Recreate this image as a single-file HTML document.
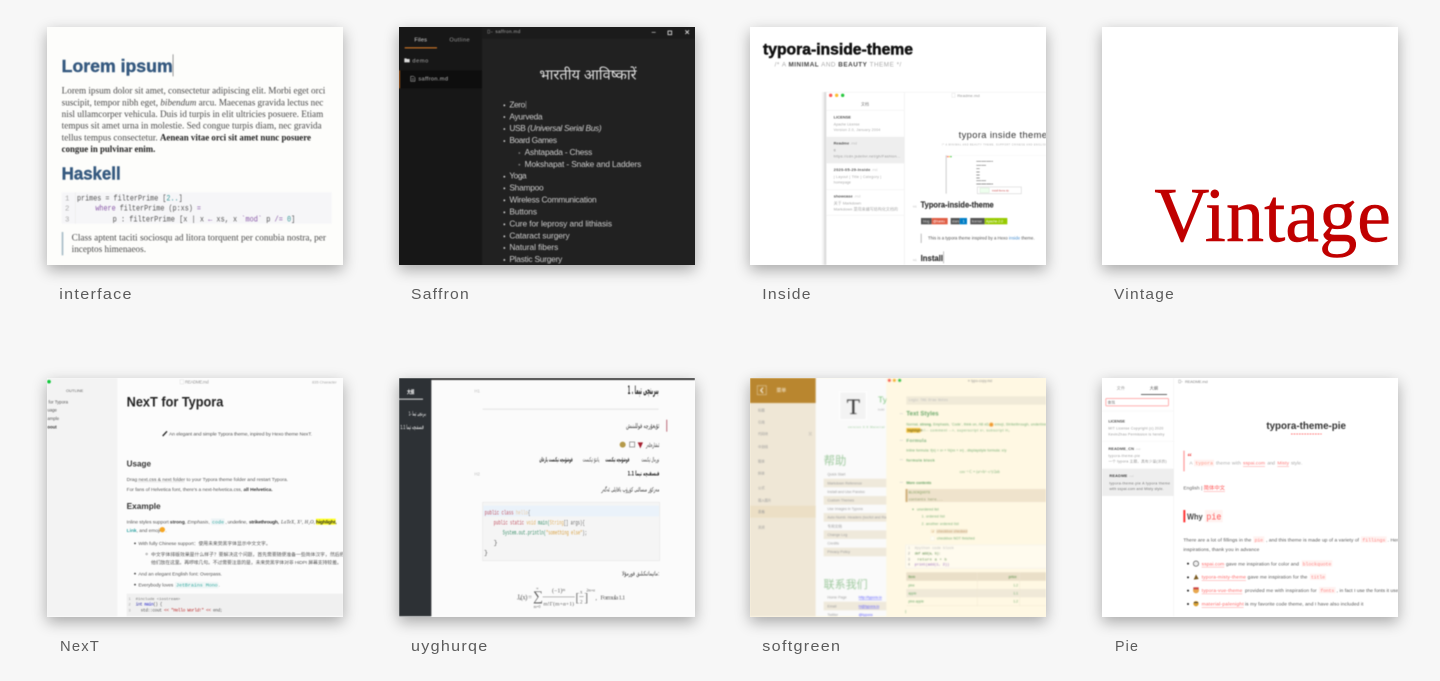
<!DOCTYPE html>
<html lang="en">
<head>
<meta charset="utf-8">
<title>Themes</title>
<style>
html,body{margin:0;padding:0;width:1440px;height:681px;overflow:hidden;background:#f7f7f7}
.c{position:absolute;width:296px;height:238.33px;background:#fff;box-shadow:0 5px 14px rgba(0,0,0,.32);overflow:hidden}
.c svg{position:absolute;left:0;top:0;width:296px;height:238.33px;display:block;filter:blur(.5px)}
svg text{font-family:"Liberation Sans","Noto Sans CJK SC","DejaVu Sans",sans-serif;white-space:pre}
svg .s{font-family:"Liberation Serif","Noto Serif CJK SC",serif}
svg .m{font-family:"Liberation Mono","DejaVu Sans Mono",monospace}
svg .b{font-weight:700}
svg .u{font-family:"DejaVu Sans",sans-serif}
#labels{position:absolute;left:0;top:0;width:1440px;height:681px}
#labels text{font-size:15px;fill:#5c5c5c;letter-spacing:1.2px}
</style>
</head>
<body>

<!-- interface -->
<div class="c" style="left:47px;top:26.67px;background:#fdfdfb">
<svg viewBox="51 50 888 715">
<text x="95" y="185" font-size="54" class="b" fill="#35597f" stroke="#35597f" stroke-width="1.2" textLength="333" lengthAdjust="spacingAndGlyphs">Lorem ipsum</text>
<rect x="428" y="132" width="2.5" height="66" fill="#888"/>
<g font-size="29" fill="#4a4a4a" class="s">
<text class="s" x="95" y="250" font-size="29" fill="#4a4a4a" textLength="791" lengthAdjust="spacingAndGlyphs">Lorem ipsum dolor sit amet, consectetur adipiscing elit. Morbi eget orci</text>
<text class="s" x="95" y="285" font-size="29" fill="#4a4a4a" textLength="785" lengthAdjust="spacingAndGlyphs">suscipit, tempor nibh eget, <tspan font-style="italic">bibendum</tspan> arcu. Maecenas gravida lectus nec</text>
<text class="s" x="95" y="320" font-size="29" fill="#4a4a4a" textLength="785" lengthAdjust="spacingAndGlyphs">nisl ullamcorper vehicula. Duis id turpis in elit ultricies posuere. Etiam</text>
<text class="s" x="95" y="355" font-size="29" fill="#4a4a4a" textLength="780" lengthAdjust="spacingAndGlyphs">tempus sit amet urna in molestie. Sed congue turpis diam, nec gravida</text>
<text class="s" x="95" y="390" font-size="29" fill="#4a4a4a" textLength="288" lengthAdjust="spacingAndGlyphs">tellus tempus consectetur.</text>
<text class="s b" x="390" y="390" font-size="29" fill="#222" textLength="453" lengthAdjust="spacingAndGlyphs">Aenean vitae orci sit amet nunc posuere</text>
<text class="s b" x="95" y="425" font-size="29" fill="#222" textLength="281" lengthAdjust="spacingAndGlyphs">congue in pulvinar enim.</text>
</g>
<text x="95" y="508" font-size="52" class="b" fill="#35597f" stroke="#35597f" stroke-width="1.2" textLength="177" lengthAdjust="spacingAndGlyphs">Haskell</text>
<rect x="95" y="546" width="810" height="94" fill="#f6f6f8"/>
<rect x="135" y="546" width="2" height="94" fill="#eaeaea"/>
<text class="m" x="105" y="570" font-size="22" fill="#aaa">1</text>
<text class="m" x="105" y="601" font-size="22" fill="#aaa">2</text>
<text class="m" x="105" y="633" font-size="22" fill="#aaa">3</text>
<text class="m" x="141" y="570" font-size="24" fill="#555" textLength="317" lengthAdjust="spacingAndGlyphs">primes = filterPrime [<tspan fill="#3a9a9a">2..</tspan>]</text>
<text class="m" x="196" y="601" font-size="24" fill="#555" textLength="317" lengthAdjust="spacingAndGlyphs"><tspan fill="#8a5aa8">where</tspan> filterPrime (p:xs) <tspan fill="#8a5aa8">=</tspan></text>
<text class="m" x="248" y="633" font-size="24" fill="#555" textLength="548" lengthAdjust="spacingAndGlyphs">p : filterPrime [x | x <tspan fill="#8a5aa8">←</tspan> xs, x <tspan fill="#8a5aa8">`mod`</tspan> p <tspan fill="#8a5aa8">/=</tspan> <tspan fill="#3a9a9a">0</tspan>]</text>
<rect x="95" y="665" width="5" height="70" fill="#a6bcc6"/>
<text class="s" x="125" y="690" font-size="29" fill="#4a4a4a" textLength="763" lengthAdjust="spacingAndGlyphs">Class aptent taciti sociosqu ad litora torquent per conubia nostra, per</text>
<text class="s" x="125" y="725" font-size="29" fill="#4a4a4a" textLength="223" lengthAdjust="spacingAndGlyphs">inceptos himenaeos.</text>
</svg>
</div>

<!-- Saffron -->
<div class="c" style="left:398.67px;top:26.67px;background:#212121">
<svg viewBox="41 50 888 715" style="filter:blur(.45px)">
<rect x="41" y="50" width="888" height="715" fill="#212121"/>
<rect x="41" y="50" width="249" height="715" fill="#171717"/>
<rect x="290" y="50" width="639" height="35" fill="#1b1b1b"/>
<text x="87" y="93" font-size="17" fill="#d8d8d8" textLength="38">Files</text>
<text x="192" y="93" font-size="17" fill="#999" textLength="61">Outline</text>
<rect x="58" y="111" width="97" height="3" fill="#e8832a"/>
<path d="M57 144h6l2 2h8v10H57z" fill="#ddd"/>
<text x="81" y="156" font-size="17" fill="#aaa" textLength="48">demo</text>
<rect x="41" y="180" width="249" height="54" fill="#0e0e0e"/>
<rect x="41" y="180" width="3" height="54" fill="#c86a20"/>
<path d="M76 198h9l4 4v11H76z" fill="none" stroke="#bbb" stroke-width="1.5"/><path d="M79 205h7M79 209h7" stroke="#bbb" stroke-width="1.2"/>
<text x="99" y="211" font-size="17" fill="#bbb" textLength="89">saffron.md</text>
<path d="M307 59h6v10h-6zM316 65h6" fill="none" stroke="#888" stroke-width="1.3"/>
<text x="330" y="68" font-size="14" fill="#aaa" textLength="75">saffron.md</text>
<path d="M799 66h12" stroke="#ccc" stroke-width="2"/>
<rect x="848" y="62" width="11" height="11" fill="none" stroke="#ddd" stroke-width="2.5"/>
<path d="M900 60l11 11M911 60l-11 11" stroke="#eee" stroke-width="2.4"/>
<text x="462" y="207" font-size="44" fill="#ddd" textLength="292" lengthAdjust="spacingAndGlyphs" style="font-family:'Noto Sans Devanagari','Lohit Devanagari','FreeSans','DejaVu Sans',sans-serif">भारतीय आविष्कारें</text>
<g fill="#ccc" font-size="25">
<text x="372" y="291" font-size="25" fill="#ccc" textLength="48">Zero</text><rect x="421" y="272" width="1.5" height="23" fill="#aaa"/>
<text x="372" y="327" font-size="25" fill="#ccc" textLength="100">Ayurveda</text>
<text x="372" y="362" font-size="25" fill="#ccc" textLength="277">USB <tspan font-style="italic">(Universal Serial Bus)</tspan></text>
<text x="372" y="398" font-size="25" fill="#ccc" textLength="143">Board Games</text>
<text x="418" y="434" font-size="25" fill="#ccc" textLength="203">Ashtapada - Chess</text>
<text x="418" y="470" font-size="25" fill="#ccc" textLength="350">Mokshapat - Snake and Ladders</text>
<text x="372" y="505" font-size="25" fill="#ccc" textLength="52">Yoga</text>
<text x="372" y="541" font-size="25" fill="#ccc" textLength="103">Shampoo</text>
<text x="372" y="577" font-size="25" fill="#ccc" textLength="262">Wireless Communication</text>
<text x="372" y="612" font-size="25" fill="#ccc" textLength="83">Buttons</text>
<text x="372" y="648" font-size="25" fill="#ccc" textLength="308">Cure for leprosy and lithiasis</text>
<text x="372" y="684" font-size="25" fill="#ccc" textLength="181">Cataract surgery</text>
<text x="372" y="719" font-size="25" fill="#ccc" textLength="147">Natural fibers</text>
<text x="372" y="755" font-size="25" fill="#ccc" textLength="159">Plastic Surgery</text>
</g>
<g fill="#ccc">
<circle cx="357" cy="285" r="2.8"/><circle cx="357" cy="320" r="2.8"/><circle cx="357" cy="356" r="2.8"/><circle cx="357" cy="392" r="2.8"/><circle cx="357" cy="499" r="2.8"/><circle cx="357" cy="534" r="2.8"/><circle cx="357" cy="570" r="2.8"/><circle cx="357" cy="606" r="2.8"/><circle cx="357" cy="642" r="2.8"/><circle cx="357" cy="678" r="2.8"/><circle cx="357" cy="713" r="2.8"/><circle cx="357" cy="749" r="2.8"/>
<circle cx="402" cy="428" r="2.8" fill="#777"/><circle cx="402" cy="463" r="2.8" fill="#777"/>
</g>
</svg>
</div>

<!-- Inside -->
<div class="c" style="left:750.33px;top:26.67px">
<svg viewBox="46 50 888 715" style="filter:blur(.6px)">
<rect x="46" y="50" width="888" height="715" fill="#fff"/>
<text x="85" y="132" font-size="46" class="b" fill="#111" stroke="#111" stroke-width="1.5" textLength="450" lengthAdjust="spacingAndGlyphs">typora-inside-theme</text>
<text x="120" y="168" font-size="19" fill="#aaa" textLength="380">/* A <tspan fill="#444" font-weight="700">MINIMAL</tspan> AND <tspan fill="#444" font-weight="700">BEAUTY</tspan> THEME */</text>
<rect x="262" y="245" width="14" height="520" fill="#ddd" opacity=".35"/>
<rect x="268" y="245" width="8" height="520" fill="#bbb" opacity=".4"/>
<rect x="275" y="245" width="660" height="520" fill="#fff"/>
<rect x="275" y="245" width="660" height="1.5" fill="#eee"/>
<rect x="508" y="245" width="2" height="520" fill="#eee"/>
<circle cx="288" cy="255" r="5" fill="#fc5b57"/><circle cx="306" cy="255" r="5" fill="#fdbd2e"/><circle cx="324" cy="255" r="5" fill="#28c83f"/>
<text x="379" y="285" font-size="12" fill="#777">文档</text>
<path d="M275 300h233M275 380h233M275 538h233M275 615h233" stroke="#eee" stroke-width="1.5"/>
<text x="297" y="324" font-size="12" class="b" fill="#555">LICENSE</text>
<text x="297" y="345" font-size="11" fill="#aaa">Apache License</text>
<text x="297" y="362" font-size="11" fill="#aaa" textLength="140">Version 2.0, January 2004</text>
<rect x="275" y="380" width="233" height="79" fill="#eee"/>
<text x="297" y="403" font-size="12" class="b" fill="#555">Readme <tspan fill="#bbb" font-weight="400">.md</tspan></text>
<text x="297" y="423" font-size="11" fill="#999">tt</text>
<text x="297" y="441" font-size="11" fill="#999" textLength="200">https://cdn.jsdelivr.net/gh/Fashion...</text>
<text x="297" y="482" font-size="12" class="b" fill="#555" textLength="110">2020-05-29-Inside</text><text x="410" y="482" font-size="11" fill="#ccc">.md</text>
<text x="297" y="503" font-size="11" fill="#aaa" textLength="143">| Layout | Title | Category |</text>
<text x="297" y="520" font-size="11" fill="#aaa">homepage</text>
<text x="297" y="561" font-size="12" class="b" fill="#555">showcase <tspan fill="#ccc" font-weight="400">.md</tspan></text>
<text x="297" y="582" font-size="12" fill="#aaa">关于 Markdown</text>
<text x="297" y="600" font-size="12" fill="#aaa" textLength="193">Markdown 是用来编写结构化文档的</text>
<rect x="652" y="249" width="9" height="12" fill="none" stroke="#ddd" stroke-width="1.2"/>
<text x="668" y="260" font-size="12" fill="#999" textLength="67">Readme.md</text>
<text x="672" y="383" font-size="28" fill="#333" textLength="265">typora inside theme</text>
<text x="622" y="405" font-size="7" fill="#aaa" textLength="315">/* A MINIMAL AND BEAUTY THEME, SUPPORT CHINESE AND ENGLISH</text>
<rect x="633" y="435" width="302" height="115" fill="#fff"/>
<rect x="633" y="435" width="302" height="1" fill="#eee"/><rect x="633" y="435" width="3" height="115" fill="#ccc"/>
<circle cx="639" cy="439" r="2" fill="#fc5b57"/><circle cx="644" cy="439" r="2" fill="#fdbd2e"/><circle cx="649" cy="439" r="2" fill="#28c83f"/>
<path d="M725 453h50M725 465h30M725 475h10M725 485h10M725 494h10M725 503h10M725 511h30M725 521h50" stroke="#777" stroke-width="2" stroke-dasharray="14 1"/>
<rect x="728" y="530" width="132" height="20" fill="#fff" stroke="#ccc" stroke-width="1.5"/>
<rect x="736" y="533" width="28" height="14" fill="#efe" stroke="#cdc"/><text x="772" y="543" font-size="7" fill="#c55">install-theme.zip</text>
<text x="535" y="591" font-size="9" fill="#bbb">H1</text>
<text x="558" y="591" font-size="25" class="b" fill="#333" stroke="#333" stroke-width=".5" textLength="219" lengthAdjust="spacingAndGlyphs">Typora-inside-theme</text>
<rect x="559" y="623" width="32" height="19" fill="#555"/><rect x="591" y="623" width="48" height="19" fill="#e05d44"/>
<rect x="648" y="623" width="27" height="19" fill="#555"/><rect x="675" y="623" width="22" height="19" fill="#007ec6"/>
<rect x="707" y="623" width="43" height="19" fill="#555"/><rect x="750" y="623" width="68" height="19" fill="#97ca00"/>
<text x="565" y="636" font-size="10" fill="#ddd">blog</text><text x="595" y="636" font-size="10" fill="#fff">@hanru</text>
<text x="652" y="636" font-size="10" fill="#ddd">stars</text><text x="684" y="636" font-size="10" fill="#fff">1</text>
<text x="711" y="636" font-size="10" fill="#ddd">license</text><text x="754" y="636" font-size="10" fill="#fff">Apache-2.0</text>
<rect x="558" y="670" width="3" height="28" fill="#bbb"/>
<text x="580" y="688" font-size="13" fill="#555" textLength="320">This is a typora theme inspired by a Hexo <tspan fill="#4a90d0">inside</tspan> theme.</text>
<text x="535" y="752" font-size="9" fill="#bbb">H1</text>
<text x="558" y="752" font-size="26" class="b" fill="#333" stroke="#333" stroke-width=".5" textLength="67" lengthAdjust="spacingAndGlyphs">Install</text>
<rect x="626" y="723" width="1.5" height="36" fill="#888"/>
</svg>
</div>

<!-- Vintage -->
<div class="c" style="left:1102px;top:26.67px">
<svg viewBox="36 50 888 715" style="filter:blur(.25px)">
<text class="s" x="193" y="692" font-size="232" fill="#c00000" stroke="#c00000" stroke-width="1.6" textLength="710" lengthAdjust="spacingAndGlyphs">Vintage</text>
</svg>
</div>

<!-- NexT -->
<div class="c" style="left:47px;top:378.33px;background:#fcfcfc">
<svg viewBox="51 40 888 715">
<rect x="51" y="40" width="888" height="715" fill="#fcfcfc"/>
<rect x="51" y="40" width="211" height="715" fill="#f3f3f3"/>
<circle cx="57" cy="51" r="5.5" fill="#10c83a"/>
<text x="108" y="82" font-size="12" fill="#666" textLength="52">OUTLINE</text>
<text x="52" y="116" font-size="13" fill="#555" textLength="62"> for Typora</text>
<text x="52" y="141" font-size="13" fill="#555">uage</text>
<text x="52" y="166" font-size="13" fill="#555">ample</text>
<text x="52" y="192" font-size="13" class="b" fill="#333">oout</text>
<rect x="450" y="45" width="11" height="13" fill="none" stroke="#ddd" stroke-width="1.3"/>
<text x="465" y="56" font-size="13" fill="#999" textLength="71">README.md</text>
<text x="846" y="56" font-size="12" fill="#aaa" textLength="74">835 Character</text>
<text x="290" y="125" font-size="41" class="b" fill="#222" textLength="290" lengthAdjust="spacingAndGlyphs">NexT for Typora</text>
<path d="M398 214l13-14" stroke="#222" stroke-width="4"/>
<text x="417" y="213" font-size="15" fill="#555" textLength="429">An elegant and simple Typora theme, inpired by Hexo theme NexT.</text>
<text x="290" y="306" font-size="26" class="b" fill="#333" textLength="73" lengthAdjust="spacingAndGlyphs">Usage</text>
<text x="290" y="349" font-size="14.5" fill="#555" textLength="484">Drag next.css &amp; next folder to your Typora theme folder and restart Typora.</text>
<path d="M323 352h140" stroke="#ccc" stroke-width="1.2"/>
<text x="290" y="379" font-size="14.5" fill="#555" textLength="438">For fans of Helvetica font, there's a next-helvetica.css, <tspan font-weight="700" fill="#333">all Helvetica.</tspan></text>
<text x="290" y="433" font-size="26" class="b" fill="#333" textLength="102" lengthAdjust="spacingAndGlyphs">Example</text>
<rect x="543" y="461" width="41" height="20" rx="2" fill="#eef4f6"/>
<rect x="858" y="462" width="59" height="18" fill="#ffff20"/>
<text x="290" y="476" font-size="14.5" fill="#555" textLength="249">Inline styles support <tspan font-weight="700" fill="#333">strong</tspan>, <tspan font-style="italic">Emphasis</tspan>,</text>
<text x="546" y="476" font-size="15" class="m" fill="#36aaa0">code</text>
<text x="586" y="476" font-size="14.5" fill="#555" textLength="66">, underline,</text>
<text x="657" y="476" font-size="14.5" class="b" fill="#333" textLength="90">strikethrough,</text>
<text x="753" y="476" font-size="14.5" class="s" font-style="italic" fill="#444" textLength="102">LaTeX, X², H₂O,</text>
<text x="858" y="476" font-size="14.5" class="b" fill="#222" textLength="62">highlight,</text>
<text x="290" y="502" font-size="14.5" fill="#555"><tspan font-weight="700" fill="#2aa0a0">Link</tspan>, and emoji</text>
<circle cx="397" cy="495" r="8" fill="#f5a623"/><text x="406" y="502" font-size="14.5" fill="#555">.</text>
<circle cx="315" cy="536" r="2.6" fill="#333"/>
<text x="325" y="541" font-size="14.5" fill="#555" textLength="397">With fully Chinese support：使用未来荧黑字体显示中文文字。</text>
<circle cx="350" cy="568" r="2.6" fill="none" stroke="#555" stroke-width="1.2"/>
<text x="363" y="574" font-size="14.5" fill="#555" textLength="580">中文字体排版效果是什么样子？要解决这个问题，首先需要随便准备一些简体汉字，然后把</text>
<text x="363" y="598" font-size="14.5" fill="#555" textLength="572">他们放在这里。再啰嗦几句。不过需要注意的是，未来荧黑字体对非 HiDPI 屏幕支持较差。</text>
<circle cx="315" cy="627" r="2.6" fill="#333"/>
<text x="325" y="632" font-size="14.5" fill="#555" textLength="251">And an elegant English font: Overpass.</text>
<circle cx="315" cy="660" r="2.6" fill="#333"/>
<rect x="435" y="652" width="130" height="19" fill="#eef6f6"/>
<text x="325" y="666" font-size="14.5" fill="#555" textLength="105">Everybody loves</text>
<text x="438" y="666" font-size="15" class="m" fill="#36aaa0" textLength="125">JetBrains Mono</text>
<text x="566" y="666" font-size="14.5" fill="#555">.</text>
<rect x="290" y="687" width="650" height="68" fill="#f0f0f0"/>
<text class="m" x="295" y="706" font-size="12" fill="#aaa">1</text><text class="m" x="295" y="723" font-size="12" fill="#aaa">2</text><text class="m" x="295" y="741" font-size="12" fill="#aaa">3</text>
<text class="m" x="317" y="706" font-size="12" fill="#777" textLength="134">#include &lt;iostream&gt;</text>
<text class="m" x="317" y="723" font-size="13" textLength="80"><tspan fill="#33a">int</tspan> <tspan fill="#22c">main</tspan><tspan fill="#555">() {</tspan></text>
<text class="m" x="332" y="741" font-size="13" fill="#555" textLength="246">std::cout <tspan fill="#b33">&lt;&lt;</tspan> <tspan fill="#b22">"Hello World!"</tspan> <tspan fill="#b33">&lt;&lt;</tspan> end;</text>
</svg>
</div>

<!-- uyghurqe -->
<div class="c" style="left:398.67px;top:378.33px;background:#fbfbfb">
<svg viewBox="41 40 888 715" style="filter:blur(.6px)">
<rect x="41" y="40" width="888" height="715" fill="#fbfbfb"/>
<rect x="41" y="40" width="888" height="6" fill="#333"/>
<rect x="41" y="40" width="97" height="715" fill="#2d3135"/>
<text x="65" y="88" font-size="17" class="b" fill="#fff" textLength="22" lengthAdjust="spacingAndGlyphs">大纲</text>
<rect x="41" y="102" width="72" height="3" fill="#ddd"/>
<text class="u" x="70" y="153" font-size="17" fill="#fff" textLength="52" lengthAdjust="spacingAndGlyphs">1- بىرىنچى تېما</text>
<text class="u" x="45" y="193" font-size="17" fill="#fff" textLength="70" lengthAdjust="spacingAndGlyphs">1.1 قىسقىچە تېما</text>
<text x="267" y="84" font-size="13" fill="#bbb">H1</text>
<text class="u b" x="727" y="88" font-size="34" fill="#222" textLength="93" lengthAdjust="spacingAndGlyphs">1 . بىرىنچى تېما</text>
<rect x="292" y="132" width="528" height="3" fill="#e3e3e3"/>
<rect x="843" y="165" width="2.5" height="36" fill="#b05060"/>
<text class="u" x="722" y="190" font-size="19" fill="#333" textLength="100" lengthAdjust="spacingAndGlyphs">ئۇيغۇرچە قوللىنىش</text>
<circle cx="712" cy="240" r="9" fill="#b59a4a"/>
<rect x="733" y="232" width="15" height="15" fill="none" stroke="#777" stroke-width="2"/>
<path d="M757 233h16l-8 18z" fill="#a52030"/>
<text class="u" x="782" y="247" font-size="18" fill="#333" textLength="40" lengthAdjust="spacingAndGlyphs">ئىشارەتلەر</text>
<text class="u b" x="462" y="290" font-size="18" fill="#222" textLength="100" lengthAdjust="spacingAndGlyphs">قوشۇمچە تېكىست يازغان</text>
<text class="u" x="592" y="290" font-size="18" fill="#444" textLength="50" lengthAdjust="spacingAndGlyphs">يانتۇ تېكىست</text>
<text class="u b" x="660" y="290" font-size="18" fill="#222" textLength="72" lengthAdjust="spacingAndGlyphs">قوشۇمچە تېكىست</text>
<text class="u" x="768" y="290" font-size="18" fill="#444" textLength="54" lengthAdjust="spacingAndGlyphs">نورمال تېكىست</text>
<text x="267" y="333" font-size="13" fill="#bbb">H2</text>
<text class="u b" x="727" y="333" font-size="19" fill="#222" textLength="95" lengthAdjust="spacingAndGlyphs">1.1 قىسقىچە تېما</text>
<text class="u" x="648" y="380" font-size="18" fill="#333" textLength="174" lengthAdjust="spacingAndGlyphs">مەزكۇر مىسالنى كۆرۈپ باقايلى ئەگەر</text>
<rect x="292" y="413" width="531" height="175" fill="#f5f5f5" stroke="#e8e8e8" stroke-width="2"/>
<rect x="294" y="423" width="527" height="32" fill="#eaf2fa"/>
<text class="m" x="298" y="450" font-size="20" textLength="137" lengthAdjust="spacingAndGlyphs"><tspan fill="#c05060">public class</tspan> <tspan fill="#e8c8a0">hello</tspan><tspan fill="#777">{</tspan></text>
<text class="m" x="325" y="480" font-size="20" textLength="273" lengthAdjust="spacingAndGlyphs"><tspan fill="#c05060">public static</tspan> <tspan fill="#e0b060">void</tspan> <tspan fill="#3a8f6a">main(</tspan><tspan fill="#e0b060">String</tspan><tspan fill="#666">[] args){</tspan></text>
<text class="m" x="352" y="510" font-size="20" textLength="253" lengthAdjust="spacingAndGlyphs"><tspan fill="#3a8f6a">System.out.println(</tspan><tspan fill="#d8a040">"something else"</tspan><tspan fill="#666">);</tspan></text>
<text class="m" x="325" y="540" font-size="20" fill="#666">}</text>
<text class="m" x="296" y="570" font-size="20" fill="#666">}</text>
<text class="u" x="710" y="632" font-size="18" fill="#333" textLength="112" lengthAdjust="spacingAndGlyphs">ماتېماتىكىلىق فورمۇلا:</text>
<text class="s" x="395" y="705" font-size="21" fill="#666" textLength="45">Jₐ(x) =</text>
<text class="s" x="443" y="708" font-size="42" fill="#666">∑</text>
<text class="s" x="452" y="674" font-size="11" fill="#666">∞</text>
<text class="s" x="445" y="730" font-size="11" fill="#666">m=0</text>
<text class="s" x="500" y="684" font-size="18" fill="#666">(−1)ᵐ</text>
<rect x="472" y="696" width="96" height="1.5" fill="#777"/>
<text class="s" x="474" y="723" font-size="17" fill="#666" textLength="92">m!Γ(m+α+1)</text>
<text class="s" x="570" y="710" font-size="38" fill="#777">[</text>
<text class="s" x="584" y="686" font-size="15" fill="#666">x</text><rect x="582" y="695" width="13" height="1.5" fill="#777"/><text class="s" x="584" y="716" font-size="15" fill="#666">2</text>
<text class="s" x="596" y="710" font-size="38" fill="#777">]</text>
<text class="s" x="603" y="680" font-size="11" fill="#666">2m+α</text>
<text class="s" x="630" y="705" font-size="20" fill="#666">,</text>
<text class="s" x="645" y="705" font-size="20" fill="#666" textLength="75">Formula 1.1</text>
</svg>
</div>

<!-- softgreen -->
<div class="c" style="left:750.33px;top:378.33px;background:#fff8e3">
<svg viewBox="46 40 888 715" style="filter:blur(.75px)">
<rect x="46" y="40" width="888" height="715" fill="#fafafa"/>
<rect x="46" y="40" width="197" height="715" fill="#efe7d6"/>
<rect x="46" y="40" width="197" height="75" fill="#b9862f"/>
<rect x="68" y="63" width="27" height="27" fill="none" stroke="#e8d8b8" stroke-width="1.5"/>
<path d="M85 69l-7 8 7 8" fill="none" stroke="#fff" stroke-width="3"/>
<text x="125" y="82" font-size="15" fill="#f8eeda">菜单</text>
<rect x="46" y="423" width="197" height="36" fill="#ecdfc5"/>
<text x="70" y="141" font-size="10" fill="#999">标题</text>
<text x="70" y="176" font-size="10" fill="#999">引用</text>
<text x="70" y="211" font-size="10" fill="#999">代码块</text>
<text x="70" y="250" font-size="10" fill="#999">中划线</text>
<text x="70" y="293" font-size="10" fill="#999">粗体</text>
<text x="70" y="329" font-size="10" fill="#999">斜体</text>
<text x="70" y="373" font-size="10" fill="#999">公式</text>
<text x="70" y="410" font-size="10" fill="#999">插入图片</text>
<text x="70" y="445" font-size="10" fill="#999">表格</text>
<text x="70" y="491" font-size="10" fill="#999">关闭</text>
<text x="222" y="211" font-size="10" fill="#999">⌘</text>
<rect x="315" y="82" width="80" height="83" fill="#f3f3f3" stroke="#fff" stroke-width="3"/>
<text class="s" x="336" y="148" font-size="66" fill="#333">T</text>
<text x="430" y="113" font-size="26" fill="#7cc47c">Ty</text>
<text x="430" y="138" font-size="9" fill="#aaa">build</text>
<text x="340" y="190" font-size="9" fill="#8cc48c" textLength="110">version 0.9 Material</text>
<text x="267" y="300" font-size="34" fill="#9cc89c">帮助</text>
<rect x="267" y="342" width="190" height="26" fill="#efe9db"/>
<rect x="267" y="394" width="190" height="26" fill="#efe9db"/>
<rect x="267" y="445" width="190" height="26" fill="#efe9db"/>
<rect x="267" y="497" width="190" height="26" fill="#efe9db"/>
<rect x="267" y="549" width="190" height="26" fill="#efe9db"/>
<text x="278" y="333" font-size="11" fill="#999">Quick Start</text>
<text x="278" y="359" font-size="11" fill="#999">Markdown Reference</text>
<text x="278" y="385" font-size="11" fill="#999">Install and Use Pandoc</text>
<text x="278" y="411" font-size="11" fill="#999">Custom Themes</text>
<text x="278" y="436" font-size="11" fill="#999">Use Images in Typora</text>
<text x="278" y="462" font-size="11" fill="#999">Auto Numb. Headers (toc/tct and Ra</text>
<text x="278" y="488" font-size="11" fill="#999">专用文档</text>
<text x="278" y="514" font-size="11" fill="#999">Change Log</text>
<text x="278" y="540" font-size="11" fill="#999">Credits</text>
<text x="278" y="565" font-size="11" fill="#999">Privacy Policy</text>
<text x="267" y="670" font-size="33" fill="#9cc89c">联系我们</text>
<rect x="267" y="711" width="190" height="26" fill="#efe9db"/>
<text x="278" y="702" font-size="11" fill="#999">Home Page</text><text x="372" y="702" font-size="11" fill="#55f" text-decoration="underline">http://typora.io</text>
<text x="278" y="728" font-size="11" fill="#999">Email</text><text x="372" y="728" font-size="11" fill="#55f" text-decoration="underline">hi@typora.io</text>
<text x="278" y="754" font-size="11" fill="#999">Twitter</text><text x="372" y="754" font-size="11" fill="#55f" text-decoration="underline">@typora</text>

<rect x="455" y="40" width="480" height="715" fill="#fff8e3"/>
<circle cx="464" cy="47" r="4.5" fill="#f85b50"/><circle cx="479" cy="47" r="4.5" fill="#f5b030"/><circle cx="495" cy="47" r="4.5" fill="#30c040"/>
<text x="700" y="52" font-size="10" fill="#888" textLength="72">≡ typo-copy.md</text>
<rect x="515" y="95" width="420" height="25" fill="#f0ead8"/>
<text class="m" x="522" y="109" font-size="10" fill="#bbb" textLength="118">Logic TAG Draw Notes</text>
<path d="M495 147h10M495 227h10M495 285h10M495 353h10" stroke="#ccc" stroke-width="1.5"/>
<text x="515" y="152" font-size="18" class="b" fill="#6aa86a" textLength="97">Text Styles</text>
<text x="515" y="182" font-size="10.5" fill="#6aa86a" textLength="250">Normal, <tspan font-weight="700">strong</tspan>, Emphasis, `Code`, think on, ΛΒ xΩ,</text>
<circle cx="770" cy="180" r="6" fill="#f09a30"/>
<text x="780" y="182" font-size="10.5" fill="#6aa86a" textLength="155">emoji, Strikethrough, underline</text>
<rect x="515" y="190" width="42" height="14" fill="#f5c542"/>
<text x="518" y="200" font-size="10.5" class="b" fill="#7a6a20">highlight</text>
<text x="562" y="200" font-size="10.5" fill="#7ab07a" textLength="263">&lt;!-- comment --&gt;, superscript x², subscript H₂</text>
<text x="515" y="232" font-size="14" class="b" fill="#7ab07a" textLength="60">Formula</text>
<text x="515" y="260" font-size="10.5" fill="#6aa86a" textLength="300">inline formula: f(x) = x² + ½(xx + x²) , displaystyle formula: x/y</text>
<text x="515" y="290" font-size="11" class="b" fill="#6aa86a" textLength="85">formula block</text>
<text class="s" x="675" y="325" font-size="11" fill="#6aa86a" textLength="120">cos⁻¹ C = (a²+b²−c²)/2ab</text>
<text x="515" y="358" font-size="11" class="b" fill="#5a9a5a" textLength="75">More contents</text>
<rect x="513" y="373" width="422" height="39" fill="#efe3cc"/>
<rect x="513" y="373" width="5" height="39" fill="#c9a56b"/>
<text class="m" x="522" y="386" font-size="10.5" fill="#7a9a5a" textLength="65">BLOCKQUOTE</text>
<text class="m" x="522" y="407" font-size="11" fill="#8a9a6a" textLength="103">contents here...</text>
<circle cx="535" cy="434" r="2" fill="#6aa86a"/>
<text x="547" y="437" font-size="10" fill="#6aa86a" textLength="65">unordered list</text>
<text x="561" y="458" font-size="10" fill="#6aa86a" textLength="69">1. ordered list</text>
<text x="561" y="481" font-size="10" fill="#6aa86a" textLength="111">2. another ordered list</text>
<rect x="588" y="494" width="11" height="11" fill="#f7e8cc"/>
<text x="593" y="503" font-size="9" fill="#a84">✓</text>
<rect x="604" y="493" width="94" height="14" fill="#f3e8d0"/>
<text x="607" y="503" font-size="10" fill="#b89060" textLength="91">checkbox checked</text>
<rect x="588" y="516" width="11" height="11" fill="#fffdf0" stroke="#eee"/>
<text x="607" y="525" font-size="10" fill="#6aa86a" textLength="113">checkbox NOT finished</text>
<rect x="513" y="541" width="422" height="69" fill="#fffbee" stroke="#eee" stroke-width="1.5"/>
<text class="m" x="520" y="553" font-size="10" fill="#bbb">1</text><text class="m" x="520" y="570" font-size="10" fill="#888">2</text><text class="m" x="520" y="587" font-size="10" fill="#888">3</text><text class="m" x="520" y="603" font-size="10" fill="#888">4</text>
<text class="m" x="540" y="553" font-size="11" fill="#bbb" textLength="118">#python code block</text>
<text class="m" x="540" y="570" font-size="11" fill="#5a8a4a" textLength="78">def add(a, b):</text>
<text class="m" x="548" y="587" font-size="11" fill="#5a8a4a" textLength="88">return a + b</text>
<text class="m" x="540" y="603" font-size="11" fill="#9060b8" textLength="104">print(add(1, 2))</text>
<rect x="515" y="623" width="420" height="25" fill="#eadfc8"/>
<rect x="515" y="673" width="420" height="25" fill="#f0e9d8"/>
<path d="M728 623v100M855 623v100M515 723h420M515 648h420" stroke="#f0e8d2" stroke-width="1.5"/>
<text x="521" y="640" font-size="10" class="b" fill="#6a9a5a">Item</text>
<text x="822" y="640" font-size="10" class="b" fill="#6a9a5a">price</text>
<text x="521" y="665" font-size="10" fill="#6aa86a">pine</text><text x="836" y="665" font-size="10" fill="#6aa86a">1.2</text>
<text x="521" y="690" font-size="10" fill="#6aa86a">apple</text><text x="836" y="690" font-size="10" fill="#6aa86a">1.1</text>
<text x="521" y="714" font-size="10" fill="#6aa86a">pine-apple</text><text x="836" y="714" font-size="10" fill="#6aa86a">1.2</text>
<path d="M513 736v10" stroke="#8ab88a" stroke-width="1.5"/>
</svg>
</div>

<!-- Pie -->
<div class="c" style="left:1102px;top:378.33px">
<svg viewBox="36 40 888 715" style="filter:blur(.55px)">
<rect x="36" y="40" width="888" height="715" fill="#fff"/>
<rect x="250" y="40" width="2" height="715" fill="#f3f3f3"/>
<text x="80" y="75" font-size="12.5" fill="#999">文件</text>
<text x="179" y="75" font-size="12.5" fill="#555">大纲</text>
<rect x="153" y="88" width="78" height="3" fill="#666"/>
<rect x="47.5" y="101.5" width="188" height="22" rx="2" fill="#fff" stroke="#ffb0b0" stroke-width="3"/>
<text x="53" y="117" font-size="11" fill="#777">查找</text>
<path d="M36 139h215M36 230h215" stroke="#f2f2f2" stroke-width="1.5"/>
<text x="55" y="174" font-size="12" class="b" fill="#555" textLength="50">LICENSE</text>
<text x="55" y="195" font-size="10.5" fill="#999" textLength="165">MIT License Copyright (c) 2020</text>
<text x="55" y="212" font-size="10.5" fill="#999" textLength="168">KevinZhao Permission is hereby</text>
<text x="55" y="256" font-size="12" class="b" fill="#555" textLength="77">README_CN</text><text x="136" y="256" font-size="9" fill="#ccc">.md</text>
<text x="55" y="277" font-size="10.5" fill="#999" textLength="95">typora-theme-pie</text>
<text x="55" y="294" font-size="11" fill="#999" textLength="175">一个 typora 主题，具有少量(派的)</text>
<rect x="36" y="312" width="215" height="82" fill="#eee"/>
<text x="58" y="337" font-size="12" class="b" fill="#444" textLength="54">README</text><text x="116" y="337" font-size="9" fill="#ccc">.md</text>
<text x="58" y="359" font-size="11" fill="#777" textLength="182">typora-theme-pie A typora theme</text>
<text x="58" y="376" font-size="11" fill="#777" textLength="163">with sspai.com and Misty style.</text>
<path d="M266 46h6v9h-6zM274 51h4" fill="none" stroke="#999" stroke-width="1.2"/>
<text x="285" y="55" font-size="12" fill="#888" textLength="68">README.md</text>
<text x="529" y="193" font-size="31" class="b" fill="#333" textLength="239" lengthAdjust="spacingAndGlyphs">typora-theme-pie</text>
<path d="M603 208h92" stroke="#f44" stroke-width="2" stroke-dasharray="5 3"/>
<rect x="280" y="258" width="4" height="62" fill="#ffa0a0"/>
<text class="s b" x="292" y="283" font-size="26" fill="#e44">“</text>
<rect x="312" y="285" width="60" height="20" fill="#fff2f0"/>
<text x="298" y="300" font-size="14.5" fill="#aaa">A</text>
<text class="m" x="316" y="300" font-size="14.5" fill="#f98" textLength="53">typora</text>
<text x="378" y="300" font-size="14.5" fill="#aaa" textLength="75">theme with</text>
<text x="459" y="300" font-size="14.5" fill="#f77" textLength="66">sspai.com</text>
<rect x="459" y="304" width="66" height="3" fill="#fcc"/>
<text x="532" y="300" font-size="14.5" fill="#aaa" textLength="23">and</text>
<text x="562" y="300" font-size="14.5" fill="#f77" textLength="35">Misty</text>
<rect x="562" y="304" width="35" height="3" fill="#fcc"/>
<text x="603" y="300" font-size="14.5" fill="#aaa" textLength="34">style.</text>
<text x="280" y="375" font-size="14.5" fill="#666" textLength="57">English |</text>
<text x="341" y="375" font-size="16" fill="#f55" textLength="64">简体中文</text>
<rect x="341" y="379" width="64" height="3" fill="#fcc"/>
<rect x="280" y="436" width="6" height="37" fill="#f33"/>
<text x="291" y="465" font-size="26" class="b" fill="#444" textLength="47" lengthAdjust="spacingAndGlyphs">Why</text>
<rect x="345" y="436" width="53" height="37" fill="#fff3f1"/>
<text class="m" x="349" y="465" font-size="28" fill="#f55" textLength="45" lengthAdjust="spacingAndGlyphs">pie</text>
<text x="280" y="530" font-size="14.5" fill="#555" textLength="204">There are a lot of fillings in the</text>
<rect x="490" y="515" width="33" height="19" fill="#fff2f0"/><text class="m" x="494" y="530" font-size="14.5" fill="#f88" textLength="25">pie</text>
<text x="528" y="530" font-size="14.5" fill="#555" textLength="279">, and this theme is made up of a variety of</text>
<rect x="813" y="515" width="77" height="19" fill="#fff2f0"/><text class="m" x="817" y="530" font-size="14.5" fill="#f88" textLength="69">fillings</text>
<text x="893" y="530" font-size="14.5" fill="#555" textLength="32">. Her</text>
<text x="280" y="559" font-size="14.5" fill="#555" textLength="228">inspirations, thank you in advance</text>
<circle cx="294" cy="597" r="3" fill="#222"/><circle cx="294" cy="638" r="3" fill="#222"/><circle cx="294" cy="678" r="3" fill="#222"/><circle cx="294" cy="718" r="3" fill="#222"/>
<circle cx="318" cy="597" r="8" fill="#eee" stroke="#555" stroke-width="2"/>
<path d="M311 645l7-16 8 14z" fill="#7a5a20"/>
<circle cx="318" cy="677" r="9" fill="#e8a850"/><rect x="310" y="668" width="16" height="6" fill="#c44"/>
<circle cx="318" cy="717" r="8" fill="#d8a030"/><rect x="312" y="712" width="12" height="3" fill="#444"/>
<text x="335" y="602" font-size="14.5" fill="#f66" textLength="68">sspai.com</text><rect x="335" y="606" width="68" height="3" fill="#fcc"/>
<text x="408" y="602" font-size="14.5" fill="#555" textLength="219">gave me inspiration for color and</text>
<rect x="635" y="587" width="92" height="19" fill="#fff2f0"/><text class="m" x="638" y="602" font-size="14.5" fill="#f88" textLength="86">blockquote</text>
<text x="335" y="642" font-size="14.5" fill="#f66" textLength="133">typora-misty-theme</text><rect x="335" y="646" width="133" height="3" fill="#fcc"/>
<text x="473" y="642" font-size="14.5" fill="#555" textLength="179">gave me inspiration for the</text>
<rect x="660" y="627" width="48" height="19" fill="#fff2f0"/><text class="m" x="663" y="642" font-size="14.5" fill="#f88" textLength="42">title</text>
<text x="335" y="682" font-size="14.5" fill="#f66" textLength="122">typora-vue-theme</text><rect x="335" y="686" width="122" height="3" fill="#fcc"/>
<text x="465" y="682" font-size="14.5" fill="#555" textLength="215">provided me with inspiration for</text>
<rect x="687" y="667" width="50" height="19" fill="#fff2f0"/><text class="m" x="691" y="682" font-size="14.5" fill="#f88" textLength="42">fonts</text>
<text x="740" y="682" font-size="14.5" fill="#555" textLength="185">, in fact I use the fonts it use</text>
<text x="335" y="723" font-size="14.5" fill="#f66" textLength="126">material-palenight</text><rect x="335" y="727" width="126" height="3" fill="#fcc"/>
<text x="465" y="723" font-size="14.5" fill="#555" textLength="355">is my favorite code theme, and I have also included it</text>
</svg>
</div>

<!-- labels -->
<svg id="labels" viewBox="0 0 1440 681">
<text x="59.3" y="299" textLength="73.5" lengthAdjust="spacingAndGlyphs">interface</text>
<text x="411" y="299" textLength="59" lengthAdjust="spacingAndGlyphs">Saffron</text>
<text x="762.3" y="299" textLength="49.5" lengthAdjust="spacingAndGlyphs">Inside</text>
<text x="1114" y="299" textLength="61" lengthAdjust="spacingAndGlyphs">Vintage</text>
<text x="60" y="651" textLength="40" lengthAdjust="spacingAndGlyphs">NexT</text>
<text x="411" y="651" textLength="77.5" lengthAdjust="spacingAndGlyphs">uyghurqe</text>
<text x="762.3" y="651" textLength="79" lengthAdjust="spacingAndGlyphs">softgreen</text>
<text x="1115" y="651" textLength="24" lengthAdjust="spacingAndGlyphs">Pie</text>
</svg>
</body>
</html>
